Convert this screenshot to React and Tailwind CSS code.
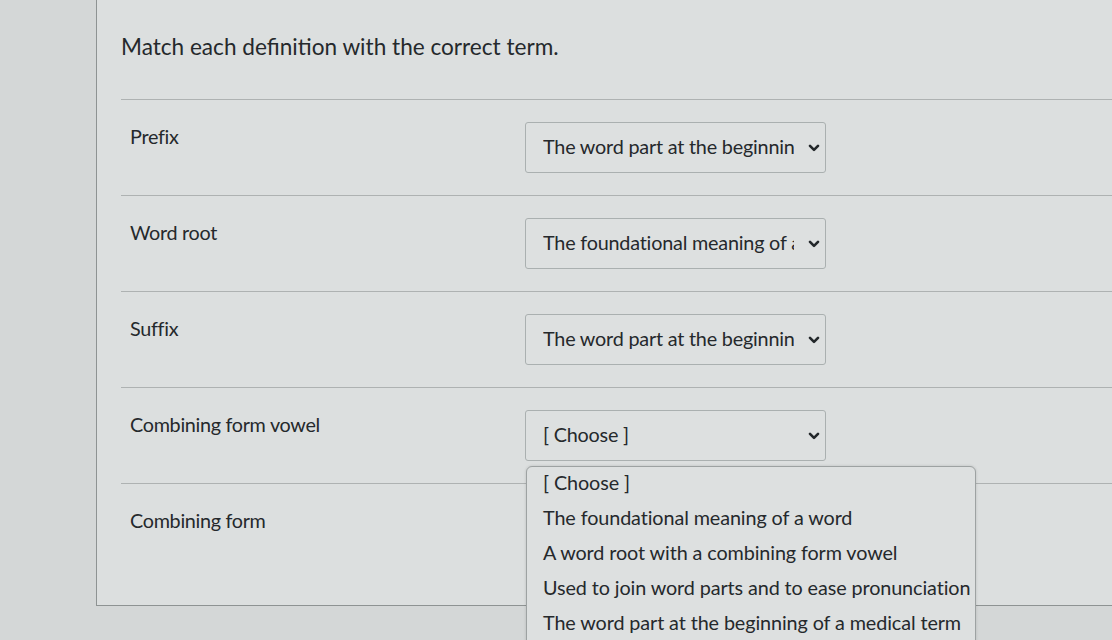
import React from "react";

const rows = [
  { label: "Prefix", value: "The word part at the beginning of a medical term" },
  { label: "Word root", value: "The foundational meaning of a word" },
  { label: "Suffix", value: "The word part at the beginning of a medical term" },
  { label: "Combining form vowel", value: "[ Choose ]", open: true },
  { label: "Combining form", value: null },
];

const options = [
  "[ Choose ]",
  "The foundational meaning of a word",
  "A word root with a combining form vowel",
  "Used to join word parts and to ease pronunciation",
  "The word part at the beginning of a medical term",
];

function Chevron() {
  return (
    <svg width="12" height="8" viewBox="0 0 12 8" className="shrink-0">
      <polyline points="2,1.8 6,5.8 10,1.8" fill="none" stroke="#22272a" strokeWidth="2.6" strokeLinecap="round" strokeLinejoin="round" />
    </svg>
  );
}

export default function App() {
  return (
    <div
      className="w-[1112px] h-[640px] bg-[#d4d7d7] overflow-hidden text-[#25292c]"
      style={{ fontFamily: "Lato, 'Open Sans', sans-serif" }}
    >
      <div className="ml-[96px] h-[606px] bg-[#dcdfdf] border-l border-b border-[#8e9393] pl-[24px]">
        <h1 className="pt-[33px] text-[22.6px] leading-[28px] font-normal">
          Match each definition with the correct term.
        </h1>
        <div className="mt-[38px]">
          {rows.map((r, i) => (
            <div key={i} className="h-[96px] border-t border-[#aeb2b2] flex items-start">
              <div className="w-[404px] pl-[9px] pt-[24px] text-[19.8px] leading-[24px] tracking-[-0.3px]">
                {r.label}
              </div>
              {r.value !== null && (
                <div className="relative mt-[22px]">
                  <div className="w-[301px] h-[51px] border border-[#aab0b0] rounded-[3px] bg-[#dde0e0] flex items-center pl-[17px] pr-[4px] pb-[3px]">
                    <div className="w-[251px] overflow-hidden whitespace-nowrap text-[19.8px] leading-[24px] tracking-[-0.2px]">
                      {r.value}
                    </div>
                    <div className="ml-[14px] pt-[3px]">
                      <Chevron />
                    </div>
                  </div>
                  {r.open && (
                    <div className="absolute left-[1px] top-[56px] w-[450px] h-[200px] bg-[#dde0e0] border border-[#9da2a2] rounded-t-[6px] shadow-[0_0_3px_rgba(0,0,0,0.15)] pl-[16px] z-10">
                      {options.map((o) => (
                        <div key={o} className="h-[35px] leading-[30px] text-[19.8px] whitespace-nowrap tracking-[-0.1px]">
                          {o}
                        </div>
                      ))}
                    </div>
                  )}
                </div>
              )}
            </div>
          ))}
        </div>
      </div>
    </div>
  );
}
